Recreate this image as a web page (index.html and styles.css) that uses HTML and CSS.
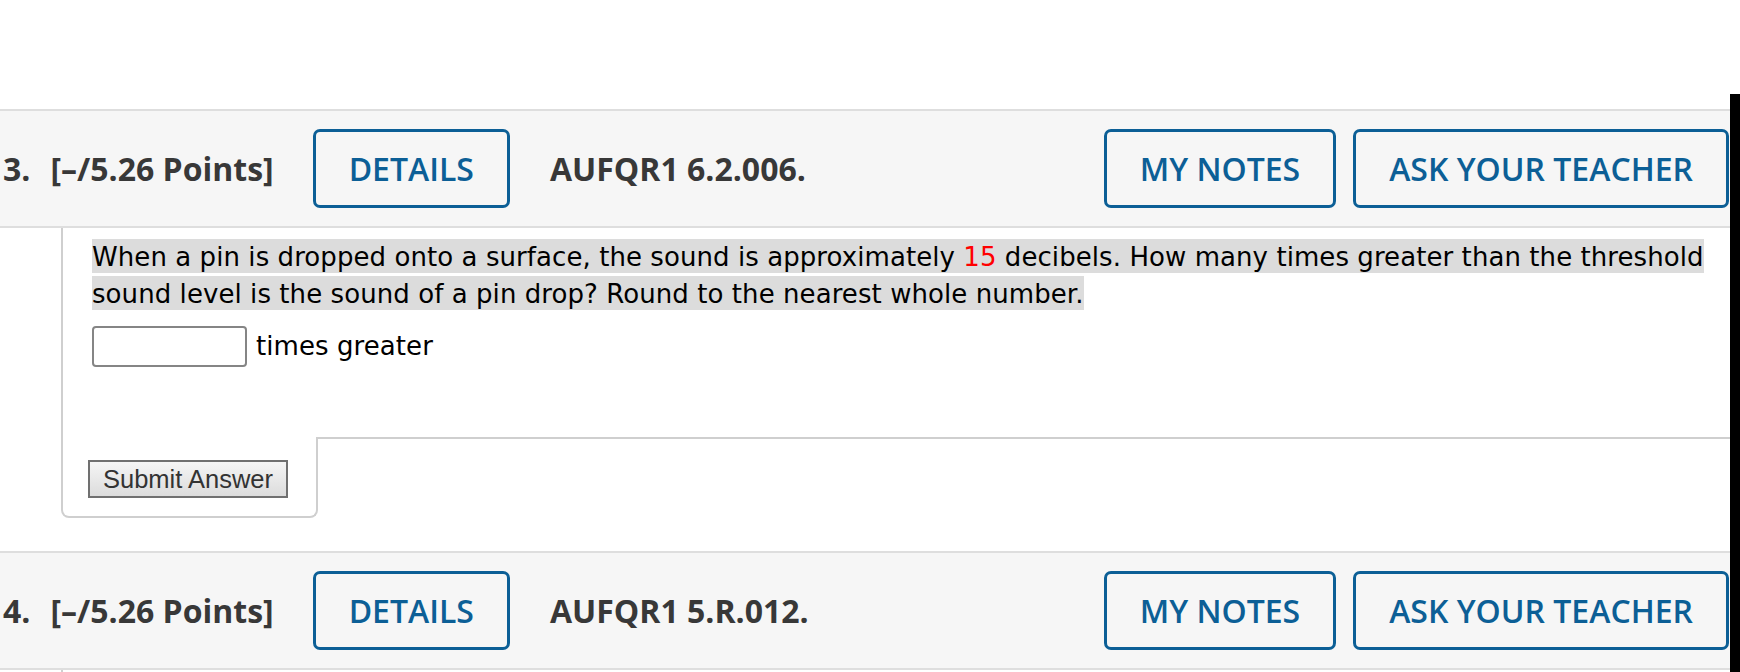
FILE: index.html
```html
<!DOCTYPE html>
<html lang="en">
<head>
<meta charset="utf-8">
<title>AUFQR1 6.2.006.</title>
<link rel="stylesheet" href="styles.css">
</head>
<body>
<div class="page">
  <div class="qhead">
    <span class="qnum">3.</span>
    <span class="qpts">[–/5.26 Points]</span>
    <button class="qbtn details">DETAILS</button>
    <span class="qcode">AUFQR1 6.2.006.</span>
    <div class="qactions">
      <button class="qbtn">MY NOTES</button>
      <button class="qbtn">ASK YOUR TEACHER</button>
    </div>
  </div>
  <div class="qbody">
    <p class="qtext"><span class="hl">When a pin is dropped onto a surface, the sound is approximately </span><span class="hl red">15</span><span class="hl"> decibels. How many times greater than the threshold </span><br><span class="hl">sound level is the sound of a pin drop? Round to the nearest whole number.</span></p>
    <div class="answer">
      <input class="ans-input" type="text" aria-label="answer">
      <span class="unit">times greater</span>
    </div>
  </div>
  <div class="qfoot">
    <div class="submitbox">
      <button class="submit">Submit Answer</button>
    </div>
    <div class="filler"></div>
  </div>

  <div class="qhead">
    <span class="qnum">4.</span>
    <span class="qpts">[–/5.26 Points]</span>
    <button class="qbtn details">DETAILS</button>
    <span class="qcode">AUFQR1 5.R.012.</span>
    <div class="qactions">
      <button class="qbtn">MY NOTES</button>
      <button class="qbtn">ASK YOUR TEACHER</button>
    </div>
  </div>
  <div class="qbody next"></div>
</div>
<div class="edge"></div>
</body>
</html>
```
FILE: styles.css
```css
html, body {
  margin: 0;
  padding: 0;
  background: #fff;
}
body {
  display: flex;
  width: 1740px;
  height: 672px;
  overflow: hidden;
}
.page {
  flex: 1;
  min-width: 0;
  padding-top: 109px;
}
.edge {
  width: 10px;
  margin-top: 94px;
  background: #000;
}
.qhead {
  display: flex;
  align-items: center;
  box-sizing: border-box;
  height: 119px;
  background: #f6f6f6;
  border-top: 2px solid #dedede;
  border-bottom: 2px solid #dedede;
  padding-left: 3px;
  font-family: "Open Sans", "Noto Sans", sans-serif;
  font-size: 32px;
  color: #383838;
  white-space: nowrap;
}
.qnum {
  font-weight: 700;
  margin-right: 20px;
}
.qpts {
  font-weight: 700;
}
.qcode {
  font-weight: 700;
  margin-left: 40px;
}
.qbtn {
  box-sizing: border-box;
  height: 79px;
  padding: 0 33px;
  border: 3px solid #0c5f96;
  border-radius: 7px;
  background: transparent;
  color: #0c5f96;
  font-family: "Open Sans", "Noto Sans", sans-serif;
  font-weight: 600;
  font-size: 32px;
  line-height: 1;
}
.details {
  margin-left: 39px;
}
.qactions {
  margin-left: auto;
  display: flex;
  gap: 17px;
  padding-right: 1px;
}
.qbody {
  margin-left: 61px;
  border-left: 2px solid #cfcfcf;
  padding: 11px 0 70px 29px;
  font-family: "DejaVu Sans", Verdana, sans-serif;
  font-size: 26px;
  letter-spacing: 0.07px;
  color: #000;
}
.qtext {
  margin: 0;
  line-height: 37px;
  padding-right: 8px;
  white-space: nowrap;
}
.hl {
  background: #dcdcdc;
  padding: 3px 0 1px;
}
.red {
  color: #ff0000;
}
.answer {
  display: flex;
  align-items: center;
  gap: 9px;
  margin-top: 13px;
  height: 41px;
}
.ans-input {
  box-sizing: border-box;
  width: 155px;
  height: 41px;
  margin: 0;
  border: 2px solid #858585;
  border-radius: 4px;
  background: #fff;
}
.unit {
  line-height: 41px;
}
.qfoot {
  display: flex;
  margin-left: 61px;
  margin-bottom: 33px;
}
.submitbox {
  box-sizing: border-box;
  width: 257px;
  border: 2px solid #cfcfcf;
  border-top: 0;
  border-radius: 0 0 8px 8px;
  padding: 23px 0 18px 25px;
}
.submit {
  box-sizing: border-box;
  width: 200px;
  height: 38px;
  margin: 0;
  padding: 0;
  border: 2px solid #707070;
  background: linear-gradient(#f5f5f5, #dcdcdc);
  font-family: "Liberation Sans", Arial, sans-serif;
  font-size: 25.5px;
  color: #333;
  line-height: 34px;
}
.filler {
  flex: 1;
  border-top: 2px solid #cfcfcf;
}
.qbody.next {
  height: 20px;
  padding: 0;
}
```
